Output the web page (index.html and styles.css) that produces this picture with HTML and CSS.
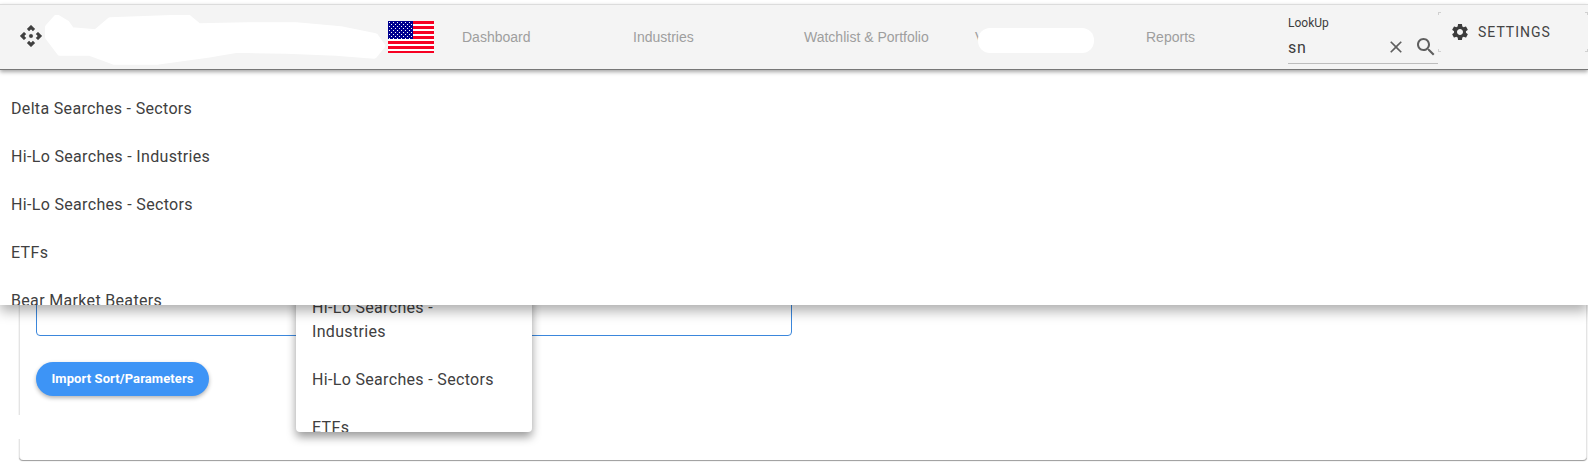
FILE: index.html
```html
<!DOCTYPE html>
<html lang="en">
<head>
<meta charset="utf-8">
<title>Dashboard</title>
<link rel="stylesheet" href="styles.css">
</head>
<body>
<header class="topbar">
  <svg class="logo-icon" viewBox="0 0 24 24"><path d="M15.54 5.54L13.77 7.3 12 5.54 10.23 7.3 8.46 5.54 12 2l3.54 3.54zm2.92 10l-1.76-1.77L18.46 12l-1.76-1.77 1.76-1.77L22 12l-3.54 3.54zm-10 2.92l1.77-1.76L12 18.46l1.77-1.76 1.77 1.76L12 22l-3.54-3.54zm-2.92-10l1.76 1.77L5.54 12l1.76 1.77-1.76 1.77L2 12l3.54-3.54z"/><circle cx="12" cy="12" r="1.6"/></svg>
  <svg class="flag" viewBox="0 0 46 32" shape-rendering="crispEdges">
    <defs>
      <pattern id="stars" width="4" height="4" patternUnits="userSpaceOnUse"><rect x="1" y="1" width="1" height="1" fill="#fff"/><rect x="3" y="3" width="1" height="1" fill="#fff"/></pattern>
    </defs>
    <rect width="46" height="32" fill="#fff"/>
    <rect y="0" width="46" height="2.5" fill="#f70022"/>
    <rect y="5" width="46" height="2.5" fill="#f70022"/>
    <rect y="10" width="46" height="2.5" fill="#f70022"/>
    <rect y="15" width="46" height="2.5" fill="#f70022"/>
    <rect y="20" width="46" height="2.5" fill="#f70022"/>
    <rect y="25" width="46" height="2.5" fill="#f70022"/>
    <rect y="29.5" width="46" height="2.5" fill="#f70022"/>
    <rect width="25" height="18" fill="#00008f"/>
    <rect width="25" height="18" fill="url(#stars)"/>
  </svg>
  <nav class="nav">
    <a class="nav-link">Dashboard</a>
    <a class="nav-link">Industries</a>
    <a class="nav-link">Watchlist &amp; Portfolio</a>
    <a class="nav-link">V</a>
    <a class="nav-link">Reports</a>
  </nav>
  <div class="lookup">
    <span class="lookup-label">LookUp</span>
    <div class="lookup-row">
      <span class="lookup-value">sn</span>
      <svg class="icon-close" viewBox="0 0 24 24"><path d="M19 6.41L17.59 5 12 10.59 6.41 5 5 6.41 10.59 12 5 17.59 6.41 19 12 13.41 17.59 19 19 17.59 13.41 12z"/></svg>
      <svg class="icon-search" viewBox="0 0 24 24"><path d="M15.5 14h-.79l-.28-.27C15.41 12.59 16 11.11 16 9.5 16 5.91 13.09 3 9.5 3S3 5.91 3 9.5 5.91 16 9.5 16c1.61 0 3.09-.59 4.23-1.57l.27.28v.79l5 4.99L20.49 19l-4.99-5zm-6 0C7.01 14 5 11.99 5 9.5S7.01 5 9.5 5 14 7.01 14 9.5 11.99 14 9.5 14z"/></svg>
    </div>
  </div>
  <button class="settings" type="button">
    <svg class="icon-gear" viewBox="0 0 24 24"><path d="M19.14 12.94c.04-.3.06-.61.06-.94 0-.32-.02-.64-.07-.94l2.03-1.58c.18-.14.23-.41.12-.61l-1.92-3.32c-.12-.22-.37-.29-.59-.22l-2.39.96c-.5-.38-1.03-.7-1.62-.94l-.36-2.54c-.04-.24-.24-.41-.48-.41h-3.84c-.24 0-.43.17-.47.41l-.36 2.54c-.59.24-1.13.57-1.62.94l-2.39-.96c-.22-.08-.47 0-.59.22L2.74 8.87c-.12.21-.08.47.12.61l2.03 1.58c-.05.3-.09.63-.09.94s.02.64.07.94l-2.03 1.58c-.18.14-.23.41-.12.61l1.92 3.32c.12.22.37.29.59.22l2.39-.96c.5.38 1.03.7 1.62.94l.36 2.54c.05.24.24.41.48.41h3.84c.24 0 .44-.17.47-.41l.36-2.54c.59-.24 1.13-.56 1.62-.94l2.39.96c.22.08.47 0 .59-.22l1.92-3.32c.12-.22.07-.47-.12-.61l-2.01-1.58zM12 15.6c-1.98 0-3.6-1.62-3.6-3.6s1.62-3.6 3.6-3.6 3.6 1.62 3.6 3.6-1.62 3.6-3.6 3.6z"/></svg>
    <span>SETTINGS</span>
  </button>
  <svg class="mask-logo" viewBox="0 0 350 50"><path d="M3 12 L12 2 L22 8 L27 15 L52 17 L66 5 L145 2 L156 11 L205 10 L255 10 L300 14 L335 21 L342 31 L334 41 L295 38 L245 36 L195 35 L165 40 L115 47 L70 47 L45 38 L15 38 L3 22 Z"/></svg>
  <div class="mask-nav"></div>
</header>

<div class="mega-menu">
  <a class="mega-item">Delta Searches - Sectors</a>
  <a class="mega-item">Hi-Lo Searches - Industries</a>
  <a class="mega-item">Hi-Lo Searches - Sectors</a>
  <a class="mega-item">ETFs</a>
  <a class="mega-item">Bear Market Beaters</a>
</div>

<main class="card">
  <div class="field"></div>
  <button class="import-btn" type="button">Import Sort/Parameters</button>
  <div class="popup">
    <a class="popup-item">Hi-Lo Searches - Industries</a>
    <a class="popup-item">Hi-Lo Searches - Sectors</a>
    <a class="popup-item">ETFs</a>
  </div>
</main>
</body>
</html>
```

FILE: styles.css
```css
* { box-sizing: border-box; }

html, body { margin: 0; padding: 0; }

body {
  width: 1588px;
  height: 473px;
  overflow: hidden;
  background: #fff;
  font-family: Roboto, "Liberation Sans", sans-serif;
  color: #333;
  padding-top: 4px;
  position: relative;
}

.topbar {
  position: relative;
  height: 66px;
  display: flex;
  align-items: center;
  background: #f4f4f4;
  border-top: 1px solid #dcdcdc;
  border-bottom: 1px solid #777;
  box-shadow: 0 2px 4px rgba(0, 0, 0, .35);
  z-index: 3;
}

.logo-icon {
  width: 26px;
  height: 26px;
  margin-left: 18px;
  margin-top: -2px;
  fill: #3f3f3f;
  stroke: #3f3f3f;
  stroke-width: .5;
  flex: none;
}

.flag {
  width: 46px;
  height: 32px;
  margin-left: 344px;
  margin-top: -1px;
  flex: none;
}

.nav {
  display: grid;
  grid-template-columns: repeat(4, 171px) 142px;
  margin-left: 28px;
  margin-top: -1px;
  flex: none;
}

.nav-link {
  font-family: "Liberation Sans", Arial, sans-serif;
  font-size: 14px;
  line-height: 20px;
  color: #9e9e9e;
}

.lookup {
  width: 150px;
  height: 59px;
  align-self: flex-start;
  margin-top: 0;
  padding-top: 10px;
  border-bottom: 1px solid #bdbdbd;
  flex: none;
}

.lookup-label {
  display: block;
  font-size: 12px;
  line-height: 16px;
  color: #3c3c3c;
}

.lookup-row {
  display: flex;
  align-items: center;
  height: 26px;
  margin-top: 3px;
}

.lookup-value {
  font-size: 16px;
  letter-spacing: .8px;
  color: #3c3c3c;
  flex: 1;
}

.icon-close {
  width: 20px;
  height: 20px;
  fill: #5f5f5f;
}

.icon-search {
  width: 24px;
  height: 24px;
  margin-left: 8px;
  fill: #5f5f5f;
}

.settings {
  width: 151px;
  height: 40px;
  margin-top: -11px;
  margin-left: 0;
  padding: 0 0 0 12px;
  display: flex;
  align-items: center;
  gap: 8px;
  border: 0;
  font: 400 14px Roboto, "Liberation Sans", sans-serif;
  letter-spacing: 1px;
  color: #444;
  background:
    linear-gradient(#d0d0d0, #d0d0d0) 0 0 / 3px 1px no-repeat,
    linear-gradient(#d0d0d0, #d0d0d0) 0 0 / 1px 3px no-repeat,
    linear-gradient(#d0d0d0, #d0d0d0) 100% 0 / 3px 1px no-repeat,
    linear-gradient(#d0d0d0, #d0d0d0) 100% 0 / 1px 3px no-repeat,
    linear-gradient(#d0d0d0, #d0d0d0) 0 100% / 3px 1px no-repeat,
    linear-gradient(#d0d0d0, #d0d0d0) 0 100% / 1px 3px no-repeat,
    linear-gradient(#d0d0d0, #d0d0d0) 100% 100% / 3px 1px no-repeat,
    linear-gradient(#d0d0d0, #d0d0d0) 100% 100% / 1px 3px no-repeat;
}

.icon-gear {
  width: 20px;
  height: 20px;
  fill: #3c3c3c;
  flex: none;
}

.mask-logo {
  position: absolute;
  left: 45px;
  top: 10px;
  width: 345px;
  height: 50px;
  fill: #fff;
  stroke: #fff;
  stroke-width: 6;
  stroke-linejoin: round;
}

.mask-nav {
  position: absolute;
  left: 978px;
  top: 23px;
  width: 116px;
  height: 25px;
  border-radius: 12px;
  background: #fff;
}

.mega-menu {
  position: absolute;
  left: 0;
  top: 70px;
  width: 1588px;
  height: 235px;
  padding-top: 14px;
  overflow: hidden;
  background: #fff;
  box-shadow: 0 6px 12px rgba(0, 0, 0, .32);
  z-index: 2;
}

.mega-item {
  display: flex;
  align-items: center;
  height: 48px;
  padding-left: 11px;
  font-size: 16px;
  letter-spacing: .33px;
  color: #404040;
}

.card {
  position: relative;
  height: 360px;
  margin: 30px 1px 0 19px;
  padding: 20px 16px;
  background: #fff;
  border-radius: 4px;
  border-left: 1px solid #e4e4e4;
  border-right: 1px solid #e4e4e4;
  box-shadow: 0 1px 1px rgba(0, 0, 0, .4);
}

.card::before {
  content: "";
  position: absolute;
  left: -2px;
  top: 315px;
  width: 3px;
  height: 24px;
  background: #fff;
}

.field {
  width: 756px;
  height: 216px;
  border: 1px solid #3b87dc;
  border-radius: 4px;
}

.import-btn {
  display: block;
  width: 173px;
  height: 34px;
  margin-top: 26px;
  padding: 0 0 2px;
  border: 0;
  border-radius: 17px;
  background: #3d94f6;
  box-shadow: 0 2px 4px rgba(0, 0, 0, .3);
  color: #fff;
  font: 700 13px Roboto, "Liberation Sans", sans-serif;
  letter-spacing: .1px;
}

.popup {
  position: absolute;
  left: 276px;
  top: 184px;
  width: 236px;
  height: 148px;
  overflow: hidden;
  background: #fff;
  border-radius: 4px;
  box-shadow: 0 5px 10px rgba(0, 0, 0, .4);
}

.popup-item {
  display: block;
  padding: 12px 30px 12px 16px;
  font-size: 16px;
  line-height: 24px;
  letter-spacing: .33px;
  color: #404040;
}
```
